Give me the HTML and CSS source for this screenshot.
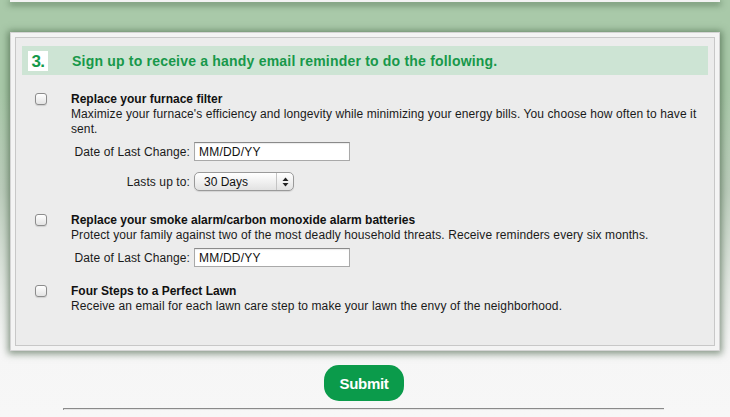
FILE: index.html
```html
<!DOCTYPE html>
<html lang="en">
<head>
<meta charset="utf-8">
<title>Email reminders</title>
<link rel="stylesheet" href="styles.css">
</head>
<body>
<div class="page">
  <div class="prev-card"></div>

  <form class="panel">
    <div class="panel-inner">
      <div class="step-head">
        <span class="step-num">3.</span>
        <h2 class="step-title">Sign up to receive a handy email reminder to do the following.</h2>
      </div>

      <div class="items">
        <div class="item">
          <input type="checkbox" class="cb">
          <div class="item-body">
            <div class="item-title">Replace your furnace filter</div>
            <p class="item-desc">Maximize your furnace's efficiency and longevity while minimizing your energy bills. You choose how often to have it sent.</p>
            <div class="field">
              <label class="field-label">Date of Last Change:</label>
              <input type="text" class="text-input" value="MM/DD/YY">
            </div>
            <div class="field field-select">
              <label class="field-label">Lasts up to:</label>
              <span class="select-wrap">
                <select class="select"><option>30 Days</option></select>
                <span class="select-arrows">
                  <svg width="7" height="10" viewBox="0 0 7 10"><path d="M3.5 0.5 L6.5 4 H0.5 Z" fill="#222"/><path d="M3.5 9.5 L6.5 6 H0.5 Z" fill="#222"/></svg>
                </span>
              </span>
            </div>
          </div>
        </div>

        <div class="item">
          <input type="checkbox" class="cb">
          <div class="item-body">
            <div class="item-title">Replace your smoke alarm/carbon monoxide alarm batteries</div>
            <p class="item-desc">Protect your family against two of the most deadly household threats. Receive reminders every six months.</p>
            <div class="field">
              <label class="field-label">Date of Last Change:</label>
              <input type="text" class="text-input" value="MM/DD/YY">
            </div>
          </div>
        </div>

        <div class="item">
          <input type="checkbox" class="cb">
          <div class="item-body">
            <div class="item-title">Four Steps to a Perfect Lawn</div>
            <p class="item-desc">Receive an email for each lawn care step to make your lawn the envy of the neighborhood.</p>
          </div>
        </div>
      </div>
    </div>
  </form>

  <div class="actions">
    <button type="button" class="submit">Submit</button>
  </div>
  <div class="rule"></div>
</div>
</body>
</html>
```

FILE: styles.css
```css
* { box-sizing: border-box; }

html, body {
  margin: 0;
  padding: 0;
}

body {
  font-family: "Liberation Sans", Arial, Helvetica, sans-serif;
  font-size: 12px;
  color: #111;
  background: linear-gradient(to bottom,
    #a9c9a9 0px,
    #a9c9a9 90px,
    #bccdbc 190px,
    #e4e9e4 290px,
    #f6f6f6 350px,
    #f7f7f7 417px);
  height: 417px;
  overflow: hidden;
}

.page {
  display: flex;
  flex-direction: column;
}

.prev-card {
  height: 2px;
  margin: 0 10px;
  background: #f3f3f3;
  box-shadow: 0 2px 6px 1px rgba(40, 70, 40, 0.55);
}

.panel {
  margin: 30px 10px 0;
  padding: 4px;
  background: #f4f4f4;
  border: 1px solid #d4d4d4;
  box-shadow: 0 1px 7px 2px rgba(45, 75, 45, 0.55);
}

.panel-inner {
  background: #ececec;
  border: 1px solid #c8c8c8;
  padding: 8px 6px 31px;
}

.step-head {
  display: flex;
  align-items: center;
  height: 29px;
  padding-left: 6px;
  background: #cde4d4;
}

.step-num {
  width: 20px;
  height: 20px;
  background: #fff;
  color: #13994a;
  font-weight: bold;
  font-size: 17px;
  line-height: 21px;
  text-align: center;
  letter-spacing: -0.5px;
}

.step-title {
  margin: 0 0 0 24px;
  font-size: 14px;
  font-weight: bold;
  color: #17984a;
  line-height: 16px;
  letter-spacing: 0.2px;
}

.items {
  display: flex;
  flex-direction: column;
  gap: 17px;
  padding-top: 17px;
}

.item {
  display: grid;
  grid-template-columns: 49px 1fr;
  align-items: start;
}

.cb {
  -webkit-appearance: none;
  appearance: none;
  width: 12px;
  height: 12px;
  margin: 1px 0 0 13px;
  border: 1px solid #8c8c8c;
  border-radius: 3px;
  background: linear-gradient(#ffffff, #e3e3e3);
  box-shadow: 0 1px 1px rgba(0, 0, 0, 0.12);
}

.item-title {
  font-weight: bold;
  line-height: 15px;
  color: #111;
}

.item-desc {
  margin: 0;
  line-height: 15px;
  color: #1a1a1a;
  padding-right: 4px;
  letter-spacing: 0.1px;
}

.field {
  display: grid;
  grid-template-columns: 119px auto;
  column-gap: 4px;
  align-items: center;
  margin-top: 5px;
  justify-content: start;
}

.field-select {
  margin-top: 11px;
  margin-bottom: 5px;
}

.field-label {
  text-align: right;
  color: #1a1a1a;
  letter-spacing: 0.1px;
}

.text-input {
  width: 156px;
  height: 19px;
  margin: 0;
  padding: 0 4px;
  font: 12px "Liberation Sans", Arial, sans-serif;
  letter-spacing: 0.2px;
  color: #111;
  background: #fff;
  border: 1px solid #a9a9a9;
  border-top-color: #8a8a8a;
  box-shadow: inset 0 1px 1px rgba(0, 0, 0, 0.08);
}

.select-wrap {
  position: relative;
  display: inline-block;
  width: 100px;
  height: 19px;
}

.select {
  -webkit-appearance: none;
  appearance: none;
  width: 100px;
  height: 19px;
  margin: 0;
  padding: 0 0 0 9px;
  font: 12px "Liberation Sans", Arial, sans-serif;
  color: #111;
  border: 1px solid #9a9a9a;
  border-radius: 5px;
  background: linear-gradient(#ffffff, #f1f1f1 50%, #e2e2e2);
  box-shadow: 0 1px 1px rgba(0, 0, 0, 0.1);
}

.select-arrows {
  position: absolute;
  top: 1px;
  right: 1px;
  bottom: 1px;
  width: 17px;
  display: flex;
  align-items: center;
  justify-content: center;
  border-left: 1px solid #c4c4c4;
  pointer-events: none;
}

.actions {
  display: flex;
  justify-content: center;
  margin-top: 14px;
}

.submit {
  width: 80px;
  height: 36px;
  margin: 0 0 0 -2px;
  border: none;
  border-radius: 15px;
  background: #0b9b4b;
  color: #fff;
  font: bold 15px "Liberation Sans", Arial, sans-serif;
  letter-spacing: -0.3px;
  padding: 0;
}

.rule {
  margin: 7px 66px 0 63px;
  height: 2px;
  border-top: 1px solid #8a8a8a;
  border-left: 1px solid #9a9a9a;
  background: #e4e4e4;
}
```
